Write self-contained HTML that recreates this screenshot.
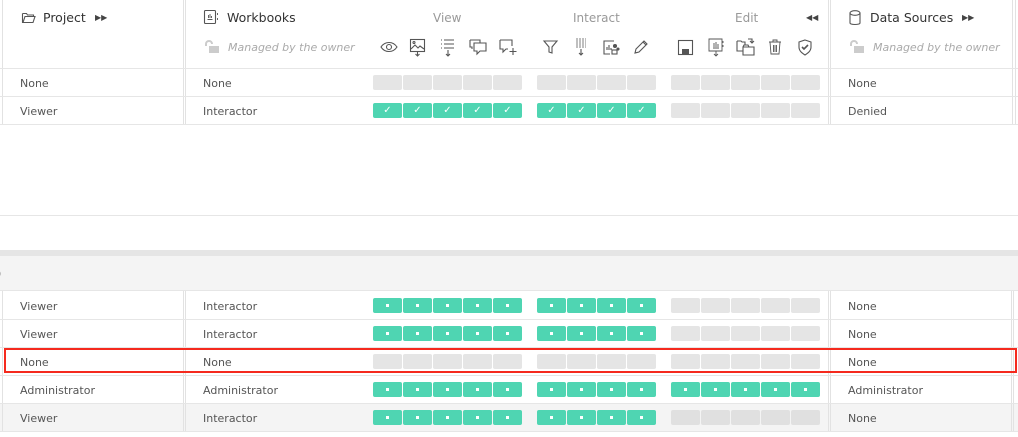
<!DOCTYPE html><html><head><style>
*{margin:0;padding:0;box-sizing:border-box}
body{width:1018px;height:437px;background:#fff;position:relative;overflow:hidden;font-family:"DejaVu Sans","Liberation Sans",sans-serif;font-size:11px;color:#555}
.a{position:absolute}
.vl{position:absolute;width:1px;background:#e2e2e2}
.hl{position:absolute;height:1px;background:#e6e6e6}
.c{position:absolute;width:29px;height:15px;border-radius:2px;background:#e5e5e5}
.g{background:#4fd5b2;color:#fff;text-align:center;font-size:10px;line-height:15px;font-weight:bold}
.d::after{content:"";position:absolute;left:13px;top:6px;width:3px;height:3px;background:#fff}
.t{position:absolute;line-height:14px}
.h{font-size:12.5px;color:#333}
.gh{font-size:12px;color:#999}
.m{font-size:11px;color:#aaa;font-style:italic}
svg{position:absolute;overflow:visible}
svg *{fill:none;stroke:#555;stroke-width:1.1}
</style></head><body>
<div class="vl" style="left:2px;top:0;height:124px"></div>
<div class="vl" style="left:183px;top:0;height:124px"></div>
<div class="vl" style="left:185px;top:0;height:124px"></div>
<div class="vl" style="left:828px;top:0;height:124px"></div>
<div class="vl" style="left:830px;top:0;height:124px"></div>
<div class="vl" style="left:1012px;top:0;height:124px"></div>
<div class="vl" style="left:1015px;top:0;height:124px"></div>
<div class="hl" style="left:0;top:68px;width:1018px"></div>
<div class="hl" style="left:0;top:96px;width:1018px"></div>
<div class="hl" style="left:0;top:124px;width:1018px"></div>
<div class="hl" style="left:0;top:215px;width:1018px"></div>
<div class="a" style="left:0;top:250px;width:1018px;height:6px;background:#e5e5e5"></div>
<div class="a" style="left:0;top:256px;width:1018px;height:35px;background:#f4f4f4;border-bottom:1px solid #e6e6e6"></div>
<div class="t" style="left:-3px;top:267px;color:#555">)</div>
<div class="a" style="left:0;top:403px;width:1018px;height:28px;background:#f4f4f4"></div>
<div class="vl" style="left:2px;top:291px;height:141px"></div>
<div class="vl" style="left:183px;top:291px;height:141px"></div>
<div class="vl" style="left:185px;top:291px;height:141px"></div>
<div class="vl" style="left:828px;top:291px;height:141px"></div>
<div class="vl" style="left:830px;top:291px;height:141px"></div>
<div class="vl" style="left:1011px;top:291px;height:141px"></div>
<div class="vl" style="left:1013px;top:291px;height:141px"></div>
<div class="hl" style="left:0;top:319px;width:1018px"></div>
<div class="hl" style="left:0;top:347px;width:1018px"></div>
<div class="hl" style="left:0;top:375px;width:1018px"></div>
<div class="hl" style="left:0;top:403px;width:1018px"></div>
<div class="hl" style="left:0;top:431px;width:1018px"></div>

<svg style="left:22px;top:12px" width="14" height="12"><path d="M0.5 1.5h4l1 1.5h6v1.5M0.5 1.5v9h10.5l2-6h-10l-2 6"/></svg>
<div class="t h" style="left:43px;top:11px">Project</div>
<div class="t" style="left:95px;top:11px;font-size:8px;color:#444">▶▶</div>
<svg style="left:204px;top:10px" width="16" height="16"><rect x="0.5" y="0.5" width="11" height="13" rx="1"/><path d="M4.5 8v-3M6 8v-4M7.5 8v-2M3.5 9.5h5M13.5 3v2M13.5 8v2" style="stroke-width:0.9"/></svg>
<div class="t h" style="left:227px;top:11px">Workbooks</div>
<div class="t gh" style="left:433px;top:11px">View</div>
<div class="t gh" style="left:573px;top:11px">Interact</div>
<div class="t gh" style="left:735px;top:11px">Edit</div>
<div class="t" style="left:806px;top:11px;font-size:8px;color:#444">◀◀</div>
<svg style="left:849px;top:10px" width="12" height="16"><ellipse cx="6" cy="3" rx="5" ry="2.3"/><path d="M1 3v10c0 2 10 2 10 0V3"/></svg>
<div class="t h" style="left:870px;top:11px">Data Sources</div>
<div class="t" style="left:962px;top:11px;font-size:8px;color:#444">▶▶</div>
<svg style="left:204px;top:40px" width="18" height="14"><path d="M2 6V4a3 3 0 0 1 6 0" style="stroke:#ccc;stroke-width:2"/><rect x="5" y="6" width="10" height="7" style="fill:#ccc;stroke:none"/></svg>
<div class="t m" style="left:228px;top:41px">Managed by the owner</div>
<svg style="left:849px;top:40px" width="18" height="14"><path d="M2 6V4a3 3 0 0 1 6 0" style="stroke:#ccc;stroke-width:2"/><rect x="5" y="6" width="10" height="7" style="fill:#ccc;stroke:none"/></svg>
<div class="t m" style="left:873px;top:41px">Managed by the owner</div>

<svg style="left:380px;top:41px" width="18" height="12"><path d="M1 6c4-6 12-6 16 0c-4 6-12 6-16 0z"/><circle cx="9" cy="6" r="2.5"/></svg>
<svg style="left:410px;top:39px" width="16" height="18"><rect x="0.5" y="0.5" width="14" height="12"/><path d="M1 10l4-4 3 3 2-2 4 3M7.5 13v4M5.5 15l2 2 2-2"/><circle cx="4" cy="3.5" r="1"/></svg>
<svg style="left:440px;top:39px" width="16" height="18"><path d="M1 1h1M4 1h10M1 5h1M4 5h10M1 9h1M4 9h10M8 11v6M6 15l2 2 2-2"/></svg>
<svg style="left:469px;top:39px" width="18" height="16"><path d="M5 4h12v8h-6l-3 3v-3H5zM1 1h10v3M1 1v7h2v2"/></svg>
<svg style="left:499px;top:39px" width="18" height="16"><path d="M1 1h12v6M1 1v9h3v3l3-3h2M14 9v7M10.5 12.5h7"/></svg>
<svg style="left:543px;top:40px" width="16" height="14"><path d="M1 1h13l-5 6v6l-3-1V7z"/></svg>
<svg style="left:575px;top:38px" width="12" height="19"><path d="M1 1h10M1 3h10M1 5h10M1 7h10M1 9h10" style="stroke-width:0.8;stroke-dasharray:2 1"/><path d="M6 11v6M4 15l2 2 2-2"/></svg>
<svg style="left:603px;top:40px" width="16" height="16"><path d="M11 1H1v13h6M4 10v-3M6 10v-5M8 10v-2"/><circle cx="12" cy="6" r="1.5" style="fill:#555"/><rect x="9" y="10" width="5" height="4"/><circle cx="15" cy="9" r="1" style="fill:#555"/></svg>
<svg style="left:634px;top:39px" width="15" height="15"><path d="M1 14l1-4 8-8 3 3-8 8zM9 3l3 3"/></svg>
<svg style="left:678px;top:40px" width="16" height="16"><rect x="0.5" y="0.5" width="14" height="14"/><rect x="4" y="9" width="7" height="5" style="fill:#555;stroke:none"/></svg>
<svg style="left:708px;top:38px" width="17" height="19"><path d="M1 1h13v12H1zM15 3v2M15 7v2M6 9v-4M8 9v-5M10 9v-3M5 10h6M8 13v5M6 16l2 2 2-2" style="stroke-width:0.9"/></svg>
<svg style="left:736px;top:38px" width="19" height="18"><path d="M1 3h4l1 1h3v3M1 3v10h6M7 9h11v8H7zM7 9l1-2h4l1 2M12 1h4v4M14 3l2 2 2-2"/></svg>
<svg style="left:768px;top:39px" width="14" height="16"><path d="M1 3h12M5 3V1h4v2M2 3l1 12h8l1-12M5.5 6v7M7 6v7M8.5 6v7" style="stroke-width:0.9"/></svg>
<svg style="left:797px;top:39px" width="16" height="17"><path d="M8 1l6 2v5c0 4-3 6-6 8-3-2-6-4-6-8V3z"/><path d="M5 8l2 2 4-4" style="stroke-width:1.6"/></svg>

<div class="t" style="left:20px;top:77px">None</div>
<div class="t" style="left:203px;top:77px">None</div>
<div class="t" style="left:848px;top:77px">None</div>
<div class="t" style="left:20px;top:105px">Viewer</div>
<div class="t" style="left:203px;top:105px">Interactor</div>
<div class="t" style="left:848px;top:105px">Denied</div>

<div id="cells"></div>

<div class="t" style="left:20px;top:300px">Viewer</div><div class="t" style="left:203px;top:300px">Interactor</div><div class="t" style="left:848px;top:300px">None</div>
<div class="t" style="left:20px;top:328px">Viewer</div><div class="t" style="left:203px;top:328px">Interactor</div><div class="t" style="left:848px;top:328px">None</div>
<div class="t" style="left:20px;top:356px">None</div><div class="t" style="left:203px;top:356px">None</div><div class="t" style="left:848px;top:356px">None</div>
<div class="t" style="left:20px;top:384px">Administrator</div><div class="t" style="left:203px;top:384px">Administrator</div><div class="t" style="left:848px;top:384px">Administrator</div>
<div class="t" style="left:20px;top:412px">Viewer</div><div class="t" style="left:203px;top:412px">Interactor</div><div class="t" style="left:848px;top:412px">None</div>

<div class="a" style="left:4px;top:348px;width:1013px;height:25px;border:2px solid #f52a1e"></div>

<script>
var xs=[373,403,433,463,493,537,567,597,627,671,701,731,761,791];
var rows=[[82,0,0,0],[110,1,1,0],[305,2,2,0],[333,2,2,0],[361,0,0,0],[389,2,2,2],[417,2,2,0]];
var h='';
rows.forEach(function(r){xs.forEach(function(x,i){var gi=i<5?1:i<9?2:3;var t=r[gi];
var cls='c'+(t==1?' g':t==2?' g d':'');var bg=(r[0]==417&&t==0)?';background:#e0e0e0':'';
h+='<div class="'+cls+'" style="left:'+x+'px;top:'+(r[0]-7)+'px'+bg+'">'+(t==1?'✓':'')+'</div>';});});
document.getElementById('cells').innerHTML=h;
</script>
</body></html>
